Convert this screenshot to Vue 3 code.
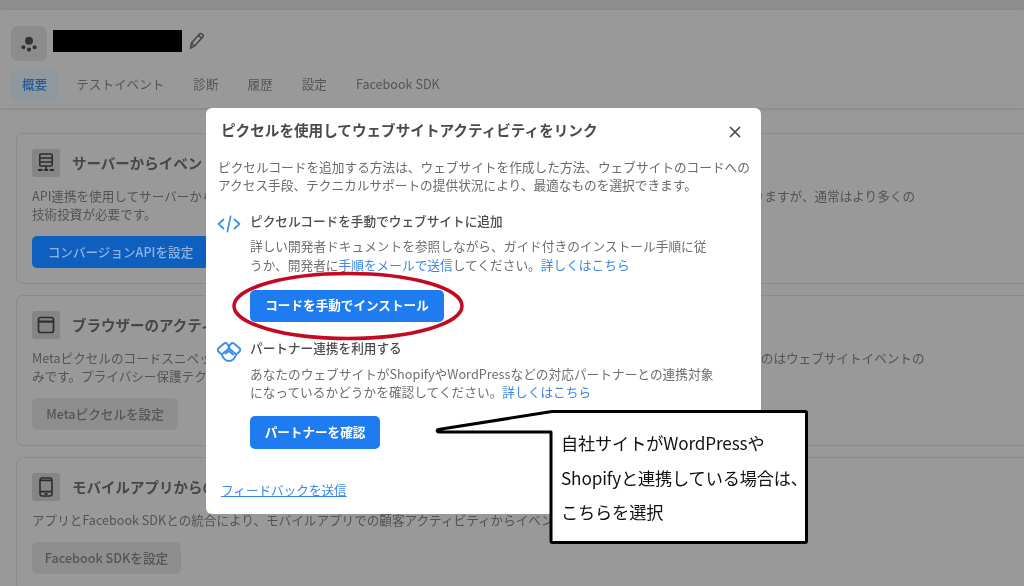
<script setup>
const tabs = ['概要', 'テストイベント', '診断', '履歴', '設定', 'Facebook SDK']
</script>

<template>
  <div class="page">
    <div class="topbar"></div>
    <header class="head">
      <div class="identity">
        <div class="avatar">
          <svg width="20" height="20" viewBox="0 0 20 20" fill="#333">
            <circle cx="10" cy="6.800" r="4" />
            <circle cx="4.400" cy="13.200" r="2" />
            <circle cx="15.600" cy="13.200" r="2" />
            <circle cx="10" cy="15.600" r="2.100" />
          </svg>
        </div>
        <div class="redacted"></div>
        <svg class="pencil" width="16" height="18" viewBox="0 0 16 18" fill="none" stroke="#444" stroke-width="1.500">
          <path d="M1.600 16.200 2.400 11 10.600 1.900a1.600 1.600 0 0 1 2.300 0l.8.7a1.600 1.600 0 0 1 .1 2.300L5.600 14Z" />
          <path d="M2.400 11 5.600 14M9.300 3.400l3.400 3" />
        </svg>
      </div>
      <nav class="tabs">
        <span v-for="(t, i) in tabs" :key="t" class="tab" :class="{ active: i === 0 }">{{ t }}</span>
      </nav>
    </header>

    <main class="cards">
      <section class="card">
        <div class="card-head">
          <div class="card-icon">
            <svg width="18" height="20" viewBox="0 0 18 20" fill="none" stroke="#2e2e2e" stroke-width="1.600">
              <rect x="2.800" y="1" width="12.400" height="12" rx="1" />
              <path d="M2.800 5h12.400M2.800 9h12.400M9 13v3" />
              <path d="M1 17h4.500M7 17h4M12.500 17H17" stroke-width="2" />
            </svg>
          </div>
          <h2>サーバーからイベントを送信</h2>
        </div>
        <p>API連携を使用してサーバーからイベントを直接共有することで、ウェブサイトでのアクティビティを測定できます。効果が高まりますが、通常はより多くの<br />技術投資が必要です。</p>
        <button class="btn primary-dim w1">コンバージョンAPIを設定</button>
      </section>

      <section class="card">
        <div class="card-head">
          <div class="card-icon">
            <svg width="18" height="18" viewBox="0 0 18 18" fill="none" stroke="#2e2e2e" stroke-width="1.700">
              <rect x="1.500" y="1.500" width="15" height="15" rx="2" />
              <path d="M1.500 5.600h15" stroke-width="2.200" />
            </svg>
          </div>
          <h2>ブラウザーのアクティビティを測定</h2>
        </div>
        <p>Metaピクセルのコードスニペットをウェブサイトに追加して、アクティビティを測定します。設定は簡単ですが、測定対象となるのはウェブサイトイベントの<br />みです。プライバシー保護テクノロジーの影響を受ける場合があります。</p>
        <button class="btn w2">Metaピクセルを設定</button>
      </section>

      <section class="card">
        <div class="card-head">
          <div class="card-icon">
            <svg width="14" height="20" viewBox="0 0 14 20" fill="none" stroke="#2e2e2e" stroke-width="1.600">
              <rect x="1" y="1" width="12" height="18" rx="2.200" />
              <path d="M1 14.600h12M1 3.400h12" />
              <path d="M5.400 16.900h3.200" stroke-width="1.800" />
            </svg>
          </div>
          <h2>モバイルアプリからのイベントを測定</h2>
        </div>
        <p>アプリとFacebook SDKとの統合により、モバイルアプリでの顧客アクティビティからイベントを測定できます。</p>
        <button class="btn w3">Facebook SDKを設定</button>
      </section>
    </main>

    <div class="modal">
      <div class="modal-head">
        <h1>ピクセルを使用してウェブサイトアクティビティをリンク</h1>
        <svg width="12" height="12" viewBox="0 0 12 12" stroke="#4a4a4a" stroke-width="1.700" fill="none">
          <path d="M1 1l10 10M11 1 1 11" />
        </svg>
      </div>
      <p class="intro">ピクセルコードを追加する方法は、ウェブサイトを作成した方法、ウェブサイトのコードへの<br />アクセス手段、テクニカルサポートの提供状況により、最適なものを選択できます。</p>

      <div class="option first">
        <svg class="opt-icon" width="24" height="18" viewBox="0 0 24 18" fill="none" stroke="#3b8fe8" stroke-width="1.700" stroke-linecap="round" stroke-linejoin="round">
          <path d="M6.500 4.500 1.500 9l5 4.500M17.500 4.500l5 4.500-5 4.500M13.600 1.400 10.400 16.600" />
        </svg>
        <div class="opt-body">
          <h3>ピクセルコードを手動でウェブサイトに追加</h3>
          <p>詳しい開発者ドキュメントを参照しながら、ガイド付きのインストール手順に従<br />うか、開発者に<a>手順をメールで送信</a>してください。<a>詳しくはこちら</a></p>
          <button class="btn blue w4">コードを手動でインストール</button>
        </div>
      </div>

      <div class="option second">
        <svg class="opt-icon" width="24" height="21" viewBox="0 0 24 21" fill="none" stroke="#3b8fe8" stroke-width="2" stroke-linejoin="round" stroke-linecap="round">
          <rect x="0.750" y="4" width="11.500" height="7" rx="2.500" transform="rotate(-40 6.500 7.500)" />
          <rect x="11.750" y="4" width="11.500" height="7" rx="2.500" transform="rotate(40 17.500 7.500)" />
          <path d="M5 14C6.500 18 9 19.900 12 19.900s5.500-1.900 7-5.900" />
          <path d="M8.500 12.500 12 10l4 3.500" />
        </svg>
        <div class="opt-body">
          <h3>パートナー連携を利用する</h3>
          <p>あなたのウェブサイトがShopifyやWordPressなどの対応パートナーとの連携対象<br />になっているかどうかを確認してください。<a>詳しくはこちら</a></p>
          <button class="btn blue w5">パートナーを確認</button>
        </div>
      </div>

      <a class="feedback">フィードバックを送信</a>
    </div>

    <svg class="ring" width="236" height="72" viewBox="0 0 236 72" fill="none">
      <ellipse cx="118" cy="36" rx="114" ry="32.500" stroke="#c20a22" stroke-width="3.500" />
    </svg>

    <div class="callout">
      <svg class="callout-shape" width="376" height="137" viewBox="0 0 376 137">
        <path d="M119 3.500H372a1.500 1.500 0 0 1 1.500 1.500V133a1.500 1.500 0 0 1-1.500 1.500H119.500a1.500 1.500 0 0 1-1.500-1.500V24H5.500a1.200 1.200 0 0 1-.2-2.400Z" fill="#fff" stroke="#000" stroke-width="3" stroke-linejoin="round" />
      </svg>
      <div class="callout-text">自社サイトがWordPressや<br />Shopifyと連携している場合は、<br />こちらを選択</div>
    </div>
  </div>
</template>

<style>
html, body { margin: 0; background: #999; }
</style>

<style scoped>
.page {
  position: relative;
  width: 1024px;
  height: 586px;
  overflow: hidden;
  background: #999;
  color: #5a5a5a;
  font-family: "Noto Sans CJK JP", "Liberation Sans", sans-serif;
  font-size: 12.600px;
  filter: blur(.4px);
}
.topbar { height: 10px; background: #8e8e8e; }
.head {
  height: 98px;
  box-sizing: border-box;
  padding: 16px 11px 0;
  background: #999;
  box-shadow: 0 1px 3px rgba(0, 0, 0, .14);
}
.identity { display: flex; align-items: center; height: 35px; }
.avatar {
  width: 36px;
  height: 35px;
  border-radius: 7px;
  background: #8c8c8c;
  display: flex;
  align-items: center;
  justify-content: center;
}
.redacted { width: 129px; height: 22px; margin: -5px 0 0 6px; background: #000; }
.pencil { margin: -5px 0 0 7px; }
.tabs { display: flex; gap: 7px; margin-top: 8px; }
.tab {
  height: 32px;
  padding: 0 11px;
  line-height: 30px;
  border-radius: 5px;
  color: #555;
  white-space: nowrap;
}
.tab.active { background: #8f979f; color: #2c5a99; font-weight: 500; }

.cards { padding: 25px 0 0 16px; display: flex; flex-direction: column; gap: 11px; }
.card {
  width: 1040px;
  box-sizing: border-box;
  padding: 15px;
  border: 1px solid #8a8a8a;
  border-radius: 7px;
}
.card-head { display: flex; align-items: center; gap: 12px; height: 28px; }
.card-icon {
  width: 28px;
  height: 28px;
  border-radius: 3px;
  background: #858585;
  display: flex;
  align-items: center;
  justify-content: center;
}
h2 { margin: 0 0 1px; font-size: 14.500px; font-weight: 700; color: #464646; white-space: nowrap; }
.card p { margin: 10px 0 13px; line-height: 18px; white-space: nowrap; color: #535353; }
.btn {
  display: block;
  height: 32px;
  padding: 0 0 2px;
  border: 0;
  border-radius: 5px;
  font: inherit;
  font-weight: 500;
  background: #8e8e8e;
  color: #555;
  white-space: nowrap;
}
.primary-dim { background: #0f5fbf; color: #8fb4e2; }
.w1 { width: 177px; }
.w2 { width: 146px; }
.w3 { width: 149px; }

.modal {
  position: absolute;
  left: 206px;
  top: 108px;
  width: 555px;
  height: 406px;
  box-sizing: border-box;
  padding: 0 11px 0 12px;
  background: #fff;
  border-radius: 6px;
  color: #666;
}
.modal-head {
  display: flex;
  align-items: center;
  justify-content: space-between;
  height: 44px;
  padding: 0 9px 2px 3px;
  box-sizing: border-box;
}
.modal-head svg { margin-top: 5px; }
h1 { margin: 0; font-size: 14.600px; font-weight: 700; color: #4a4a4a; }
.intro { margin: 6px 0 0; line-height: 18px; font-size: 12.680px; color: #6a6a6a; white-space: nowrap; }
.option { display: flex; gap: 9px; }
.option.first { margin-top: 18px; }
.option.second { margin-top: 17px; }
.opt-icon { flex: none; margin-left: -1px; }
.first .opt-icon { margin-top: 3px; }
.second .opt-icon { margin-top: 2px; }
.opt-body { min-width: 0; }
h3 { margin: 0; font-size: 12.650px; line-height: 18px; font-weight: 500; color: #4c4c4c; white-space: nowrap; }
.opt-body p { white-space: nowrap; font-size: 12.700px; color: #6e6e6e; }
.first p { margin: 6px 0 16px; line-height: 19px; }
.second p { margin: 8px 0 15px; line-height: 18px; }
a { color: #3a86e6; }
.btn.blue { background: #1f7cf0; color: #fff; font-weight: 700; padding-bottom: 3px; }
.w4 { width: 194px; }
.w5 { width: 130px; height: 33px; }
.feedback {
  position: absolute;
  left: 15px;
  top: 372px;
  font-size: 12.600px;
  text-decoration: underline;
}
.ring { position: absolute; left: 230px; top: 270px; pointer-events: none; }
.callout { position: absolute; left: 433px; top: 408px; width: 376px; height: 137px; }
.callout-shape { display: block; }
.callout-text {
  position: absolute;
  left: 128px;
  top: 18px;
  font-size: 17.200px;
  line-height: 34.500px;
  letter-spacing: -.15px;
  color: #111;
  white-space: nowrap;
}
</style>
